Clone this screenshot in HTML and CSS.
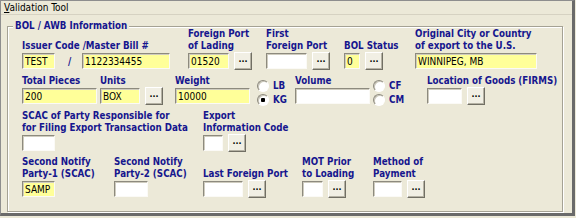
FILE: index.html
```html
<!DOCTYPE html>
<html>

<head>
	<meta charset="UTF-8">
	<link rel="stylesheet" href="styles.css">
</head>

<body>

	<div class="window">
		<div class="title"><u>V</u>alidation Tool</div>

		<div class="group">
			<div class="legend">BOL / AWB Information</div>

			<div class="row row-1">
				<div class="field">
					<label>Issuer Code /Master Bill #</label>
					<div class="controls">
						<input class="filled w33" value="TEST">
						<span class="slash">/</span>
						<input class="filled w88" value="1122334455">
					</div>
				</div>
				<div class="field">
					<label>Foreign Port<br>of Lading</label>
					<div class="controls">
						<input class="filled w41" value="01520">
						<button>...</button>
					</div>
				</div>
				<div class="field">
					<label>First<br>Foreign Port</label>
					<div class="controls">
						<input class="w41" value="">
						<button>...</button>
					</div>
				</div>
				<div class="field">
					<label>BOL Status</label>
					<div class="controls">
						<input class="filled w16" value="0">
						<button>...</button>
					</div>
				</div>
				<div class="field">
					<label>Original City or Country<br>of export to the U.S.</label>
					<div class="controls">
						<input class="filled w122" value="WINNIPEG, MB">
					</div>
				</div>
			</div>

			<div class="row row-2">
				<div class="field">
					<label>Total Pieces</label>
					<div class="controls">
						<input class="filled w75" value="200">
					</div>
				</div>
				<div class="field">
					<label>Units</label>
					<div class="controls">
						<input class="filled w40" value="BOX">
						<button>...</button>
					</div>
				</div>
				<div class="field">
					<label>Weight</label>
					<div class="controls">
						<input class="filled w75" value="10000">
					</div>
				</div>
				<div class="radios">
					<div class="radio-line"><input type="radio" name="weight"><label>LB</label></div>
					<div class="radio-line"><input type="radio" name="weight" checked><label>KG</label></div>
				</div>
				<div class="field">
					<label>Volume</label>
					<div class="controls">
						<input class="w75" value="">
					</div>
				</div>
				<div class="radios">
					<div class="radio-line"><input type="radio" name="volume"><label>CF</label></div>
					<div class="radio-line"><input type="radio" name="volume"><label>CM</label></div>
				</div>
				<div class="field">
					<label>Location of Goods (FIRMS)</label>
					<div class="controls">
						<input class="w35" value="">
						<button>...</button>
					</div>
				</div>
			</div>

			<div class="row row-3">
				<div class="field">
					<label>SCAC of Party Responsible for<br>for Filing Export Transaction Data</label>
					<div class="controls">
						<input class="w33" value="">
					</div>
				</div>
				<div class="field">
					<label>Export<br>Information Code</label>
					<div class="controls">
						<input class="w20" value="">
						<button>...</button>
					</div>
				</div>
			</div>

			<div class="row row-4">
				<div class="field">
					<label>Second Notify<br>Party-1 (SCAC)</label>
					<div class="controls">
						<input class="filled w33" value="SAMP">
					</div>
				</div>
				<div class="field">
					<label>Second Notify<br>Party-2 (SCAC)</label>
					<div class="controls">
						<input class="w34" value="">
					</div>
				</div>
				<div class="field">
					<label>Last Foreign Port</label>
					<div class="controls">
						<input class="w40" value="">
						<button>...</button>
					</div>
				</div>
				<div class="field">
					<label>MOT Prior<br>to Loading</label>
					<div class="controls">
						<input class="w21" value="">
						<button>...</button>
					</div>
				</div>
				<div class="field">
					<label>Method of<br>Payment</label>
					<div class="controls">
						<input class="w29" value="">
						<button>...</button>
					</div>
				</div>
			</div>
		</div>
	</div>

</body>

</html>
```

FILE: styles.css
```css
* {
	box-sizing: border-box;
}

body {
	margin: 0;
	background: #ece9d8;
	font-family: "DejaVu Sans Condensed", "DejaVu Sans", sans-serif;
	font-size: 10px;
	color: #000;
}

.window {
	width: 575px;
	height: 216px;
	background: #ece9d8;
	border-style: solid;
	border-width: 1px 3px 3px 1px;
	border-color: #8e8e8e #6a6a6a #6a6a6a #8e8e8e;
}

.title {
	height: 14px;
	padding: 1px 0 0 3px;
	line-height: 12px;
	border-bottom: 1px solid #d6d2c2;
}

.group {
	margin: 11px 0 0 6px;
	width: 556px;
	height: 186px;
	padding: 0 0 0 14px;
	border: 1px solid #a5a294;
	box-shadow: inset 1px 1px 0 #fff, 1px 1px 0 #fff;
}

.legend,
label {
	font-size: 9.7px;
	font-weight: bold;
	color: #16168e;
	white-space: nowrap;
}

.legend {
	width: max-content;
	margin: -7px 0 -4px -9px;
	padding: 0 2px;
	line-height: 12px;
	background: #ece9d8;
}

/* rows */

.row {
	display: grid;
	margin-top: 5px;
}

.row-1 {
	margin-top: 0;
	grid-template-columns: 166px 78px 78px 71px 1fr;
}

.row-2 {
	grid-template-columns: 78px 75px 82px 38px 78px 54px 1fr;
}

.row-3 {
	grid-template-columns: 181px 1fr;
}

.row-4 {
	margin-top: 4px;
	grid-template-columns: 92px 89px 99px 71px 1fr;
}

.field {
	display: flex;
	flex-direction: column;
	justify-content: flex-end;
}

.field label {
	line-height: 12px;
}

.controls {
	display: flex;
	align-items: center;
	gap: 5px;
	height: 18px;
}

.slash {
	width: 22px;
	margin-right: -5px;
	padding-left: 8px;
	color: #16168e;
	font-weight: bold;
}

/* inputs */

input {
	height: 16px;
	margin: 0;
	padding: 0 2px;
	font: inherit;
	color: #000;
	background: #fff;
	border: 1px solid;
	border-color: #8d8a7e #fbfaf6 #fbfaf6 #8d8a7e;
	box-shadow: inset 1px 1px 0 #cfccbf;
	outline: none;
}

input.filled {
	background: #ffff99;
}

.w16 { width: 16px; }
.w20 { width: 20px; }
.w21 { width: 21px; }
.w29 { width: 29px; }
.w33 { width: 33px; }
.w34 { width: 34px; }
.w35 { width: 35px; }
.w40 { width: 40px; }
.w41 { width: 41px; }
.w75 { width: 75px; }
.w88 { width: 88px; }
.w122 { width: 122px; }

button {
	width: 18px;
	height: 18px;
	padding: 0 0 2px;
	font-family: "DejaVu Sans", sans-serif;
	font-size: 8px;
	font-weight: bold;
	line-height: 14px;
	color: #000;
	background: #f1efe4;
	border: 1px solid;
	border-color: #fff #716f64 #716f64 #fff;
	box-shadow: inset -1px -1px 0 #b5b2a4;
}

/* radio buttons */

.radios {
	display: flex;
	flex-direction: column;
	justify-content: flex-end;
	margin-bottom: -2px;
}

.radio-line {
	display: flex;
	align-items: center;
	gap: 4px;
	height: 14px;
}

.radio-line input {
	appearance: none;
	width: 12px;
	height: 12px;
	padding: 0;
	border-radius: 50%;
	border-color: #8d8a7e #fff #fff #8d8a7e;
	box-shadow: inset 1px 1px 0 #c9c6b8;
}

.radio-line input:checked {
	background: radial-gradient(circle, #000 0 2px, #fff 2.5px);
}

.radio-line label {
	line-height: 14px;
}
```
